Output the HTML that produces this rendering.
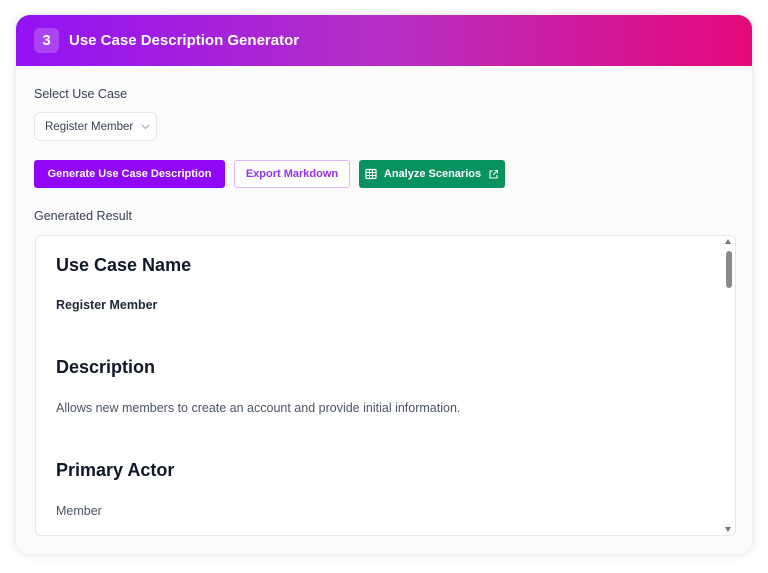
<!DOCTYPE html>
<html><head><meta charset="utf-8"><style>
*{box-sizing:border-box;margin:0;padding:0}
body{width:768px;height:573px;background:#fff;font-family:"Liberation Sans",sans-serif;position:relative;overflow:hidden}
.card{position:absolute;left:16px;top:15px;width:736px;height:539px;border-radius:14px;background:#fbfbfc;box-shadow:0 0 10px rgba(0,0,0,.13);overflow:hidden}
.hdr{height:51px;background:linear-gradient(90deg,#9312f4 0%,#b52fc4 50%,#e4097a 100%);display:flex;align-items:center;padding-left:18px}
.num{width:25px;height:25px;border-radius:6px;background:rgba(255,255,255,.2);color:#fff;font-weight:bold;font-size:15px;display:flex;align-items:center;justify-content:center}
.ttl{color:#fff;font-weight:bold;font-size:15px;margin-left:10px}
.lbl{position:absolute;left:18px;font-size:12.5px;color:#374151}
.sel{position:absolute;left:18px;top:97px;width:123px;height:29px;border:1px solid #e5e7eb;border-radius:6px;background:#fff;font-size:11.5px;color:#374151;padding:8px 0 0 10px}
.btn{position:absolute;top:145px;height:28px;border-radius:3px;font-size:11px;font-weight:bold;display:flex;align-items:center;justify-content:center}
.res{position:absolute;left:19px;top:220px;width:701px;height:301px;background:#fff;border:1px solid #e5e7eb;border-radius:6px;overflow:hidden}
h2{position:absolute;left:20px;font-size:18px;color:#111827;font-weight:bold}
p{position:absolute;left:20px;font-size:12.5px;color:#4b5563}
</style></head><body>
<div class="card">
<div class="hdr"><div class="num">3</div><div class="ttl">Use Case Description Generator</div></div>
<div class="lbl" style="top:72px">Select Use Case</div>
<div class="sel">Register Member <svg width="9" height="6" viewBox="0 0 9 6" style="margin-left:5px"><path d="M1 1l3.5 3.5L8 1" fill="none" stroke="#9ca3af" stroke-width="1"/></svg></div>
<div class="btn" style="left:18px;width:191px;background:#9007f5;color:#fff">Generate Use Case Description</div>
<div class="btn" style="left:218px;width:116px;background:#fff;border:1px solid #d9b8fb;color:#9333ea">Export Markdown</div>
<div class="btn" style="left:343px;width:146px;background:#07925f;color:#fff">
<svg width="12" height="12" viewBox="0 0 12 12" style="margin-right:7px"><rect x="1" y="1.5" width="10" height="9" rx="1" fill="none" stroke="#fff" stroke-width="1.2"/><path d="M1 4.5H11M1 7.5H11M4.5 1.5V10.5M7.5 1.5V10.5" stroke="#fff" stroke-width="1"/></svg>
Analyze Scenarios
<svg width="11" height="11" viewBox="0 0 11 11" style="margin-left:7px"><path d="M5 2H2v7h7V6M6.5 1.5H9.5V4.5M9.5 1.5L5 6" fill="none" stroke="#fff" stroke-width="1.1"/></svg></div>
<div class="lbl" style="top:194px">Generated Result</div>
<div class="res">
<h2 style="top:19px">Use Case Name</h2>
<p style="top:62px;color:#1f2937;font-weight:bold">Register Member</p>
<h2 style="top:121px">Description</h2>
<p style="top:165px">Allows new members to create an account and provide initial information.</p>
<h2 style="top:224px">Primary Actor</h2>
<p style="top:268px">Member</p>
<div style="position:absolute;right:0;top:0;width:14px;height:100%;background:#fff"></div>
<div style="position:absolute;right:4px;top:3px;width:0;height:0;border:3.5px solid transparent;border-bottom:5px solid #777;border-top:0"></div>
<div style="position:absolute;right:3px;top:15px;width:6px;height:37px;background:#8b8b8b;border-radius:3px"></div>
<div style="position:absolute;right:4px;bottom:3px;width:0;height:0;border:3.5px solid transparent;border-top:5px solid #777;border-bottom:0"></div>
</div>
</div>
</body></html>
